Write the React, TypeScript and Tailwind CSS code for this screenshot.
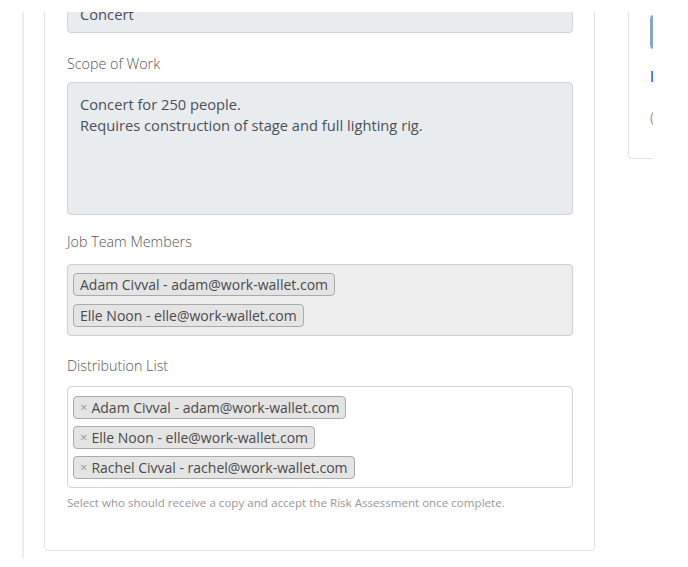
const jobTeam = [
  'Adam Civval - adam@work-wallet.com',
  'Elle Noon - elle@work-wallet.com',
]

const distribution = [
  'Adam Civval - adam@work-wallet.com',
  'Elle Noon - elle@work-wallet.com',
  'Rachel Civval - rachel@work-wallet.com',
]

function Tag({ label, removable }: { label: string; removable?: boolean }) {
  return (
    <span className="h-[23px] flex items-center border border-[#aaaaaa] bg-[#e4e4e4] rounded-[4px] px-[6px] text-[14px] leading-[21px] text-[#4a4a4a]">
      {removable && <span className="text-[#999] mr-[4px] text-[13px]">×</span>}
      {label}
    </span>
  )
}

export default function App() {
  return (
    <div className="w-[688px] h-[567px] bg-white overflow-hidden font-['Open_Sans',sans-serif]">
      <div className="mt-[12px] w-[653px] h-[546px] overflow-hidden flex items-start">
        {/* Main column */}
        <div className="ml-[22px] h-full border-l-2 border-[#ececec] pl-[20px]">
          <div className="-mt-[40px] w-[551px] border border-[#e3e3e3] rounded-[4px] pt-[22px] pl-[22px] pr-[21px] pb-[40px]">
            <div className="h-[38px] border border-[#ced4da] rounded-[4px] bg-[#e9ecef] px-3 flex items-center text-[14.7px] text-[#495057]">
              Concert
            </div>

            <label className="block mt-[20px] text-[14.3px] leading-[21px] font-light text-[#555]">Scope of Work</label>
            <div className="mt-[8px] h-[133px] border border-[#ced4da] rounded-[4px] bg-[#e9ecef] px-3 pt-[11px] text-[14.7px] leading-[21px] text-[#495057]">
              Concert for 250 people.
              <br />
              Requires construction of stage and full lighting rig.
            </div>

            <label className="block mt-[16px] text-[14.3px] leading-[21px] font-light text-[#555]">Job Team Members</label>
            <div className="mt-[12px] h-[72px] border border-[#cfcfcf] rounded-[4px] bg-[#eeeeee] pl-[5px] pt-[8px] flex flex-col items-start gap-[8px]">
              {jobTeam.map((m) => (
                <Tag key={m} label={m} />
              ))}
            </div>

            <label className="block mt-[19px] text-[14.3px] leading-[21px] font-light text-[#555]">Distribution List</label>
            <div className="mt-[10px] h-[102px] border border-[#d5d5d5] rounded-[4px] bg-white pl-[5px] pt-[9px] flex flex-col items-start gap-[7px]">
              {distribution.map((m) => (
                <Tag key={m} label={m} removable />
              ))}
            </div>
            <p className="mt-[8px] text-[11.6px] leading-[14px] text-[#999]">
              Select who should receive a copy and accept the Risk Assessment once complete.
            </p>
          </div>
        </div>

        {/* Side panel, clipped at the window edge */}
        <div className="ml-[33px] w-[60px] h-[147px] shrink-0 border-l border-b border-[#e3e3e3] rounded-bl-[4px] pl-[21px] pt-[3px]">
          <div className="w-[40px] h-[34px] rounded-[4px] bg-[#7fa9c6]" />
          <div className="mt-[20px] text-[14px] leading-[16px] font-bold text-[#2b7bff]">b</div>
          <div className="mt-[24px] text-[14px] leading-[16px] text-[#999]">(</div>
        </div>
      </div>
    </div>
  )
}
